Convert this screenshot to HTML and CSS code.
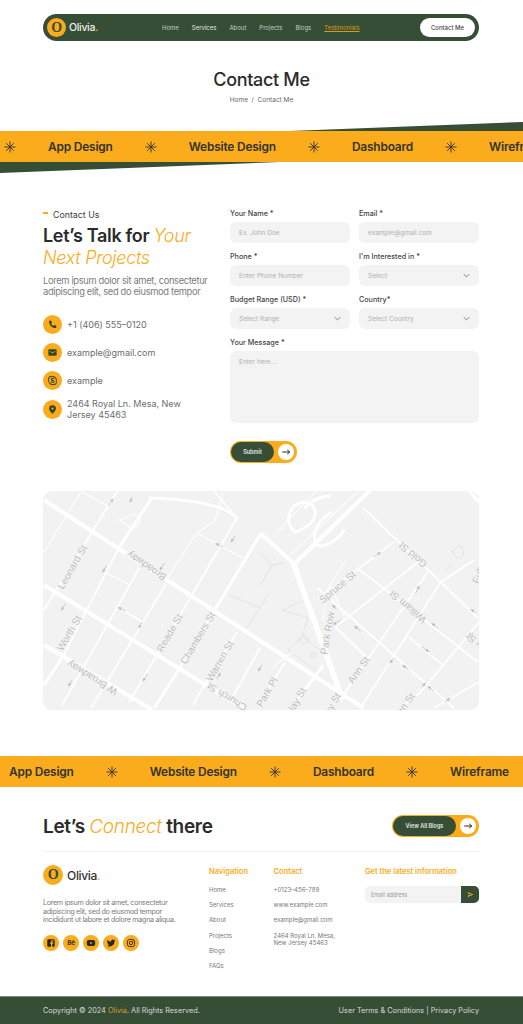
FILE: index.html
```html
<!DOCTYPE html>
<html>
<head>
    <title>Contact Me</title>
    <link rel="stylesheet" href="styles.css">
</head>
<body>
    <header class="wrap">
        <nav class="topbar">
            <a class="logo">
                <span class="logo-mark">O</span>
                <span class="logo-name">Olivia<i>.</i></span>
            </a>
            <ul class="menu">
                <li>Home</li>
                <li class="bright">Services</li>
                <li>About</li>
                <li>Projects</li>
                <li>Blogs</li>
                <li class="current">Testimonials</li>
            </ul>
            <a class="nav-btn">Contact Me</a>
        </nav>
    </header>

    <section class="title-block">
        <h1>Contact Me</h1>
        <p>Home &nbsp;/&nbsp; Contact Me</p>
    </section>

    <section class="ticker-wrap">
        <div class="ticker-back"></div>
        <div class="ticker ticker-top">
            <svg class="star" viewBox="0 0 12 12"><use href="#star"/></svg>
            <span>App Design</span>
            <svg class="star" viewBox="0 0 12 12"><use href="#star"/></svg>
            <span>Website Design</span>
            <svg class="star" viewBox="0 0 12 12"><use href="#star"/></svg>
            <span>Dashboard</span>
            <svg class="star" viewBox="0 0 12 12"><use href="#star"/></svg>
            <span>Wireframe</span>
        </div>
    </section>

    <section class="wrap contact">
        <div class="contact-left">
            <div class="eyebrow"><b></b>Contact Us</div>
            <h2>Let’s Talk for <em>Your Next Projects</em></h2>
            <p class="lead">Lorem ipsum dolor sit amet, consectetur adipiscing elit, sed do eiusmod tempor</p>
            <ul class="info">
                <li>
                    <span class="round"><svg viewBox="0 0 24 24"><path d="M6.600 3.500l3 .6 1.300 4.300-2 1.900c1 2.100 2.700 3.800 4.800 4.800l1.900-2 4.300 1.300.6 3c.1 1-.7 2.100-1.800 2.100C10.800 19.500 4.500 13.200 4.500 5.300c0-1.100.9-1.900 2.100-1.800z"/></svg></span>
                    <span>+1 (406) 555–0120</span>
                </li>
                <li>
                    <span class="round"><svg viewBox="0 0 24 24"><path d="M5 5h14a2 2 0 0 1 2 2v10a2 2 0 0 1-2 2H5a2 2 0 0 1-2-2V7a2 2 0 0 1 2-2zm1 3.500v1.700l6 3.600 6-3.600V8.500l-6 3.500z" fill-rule="evenodd"/></svg></span>
                    <span>example@gmail.com</span>
                </li>
                <li>
                    <span class="round"><svg viewBox="0 0 24 24"><path class="line" d="M8 3.500a4.500 4.500 0 0 0-4.300 5.800 8.700 8.700 0 0 0 11 11 4.500 4.500 0 0 0 5.600-5.600 8.700 8.700 0 0 0-11-11A4.500 4.500 0 0 0 8 3.500z"/><path class="line" d="M15.500 9c-1-1.500-5.800-1.800-6 .7-.2 2.600 6.200 1.700 6 4.500-.2 2.300-5.600 2.200-7 .3"/></svg></span>
                    <span>example</span>
                </li>
                <li>
                    <span class="round"><svg viewBox="0 0 24 24"><path fill-rule="evenodd" d="M12 2.500a7.500 7.500 0 0 1 7.500 7.500c0 5-7.500 11.500-7.500 11.500S4.500 15 4.500 10A7.500 7.500 0 0 1 12 2.500zm0 5a2.500 2.500 0 1 0 0 5 2.500 2.500 0 0 0 0-5z"/></svg></span>
                    <span class="address">2464 Royal Ln. Mesa, New Jersey 45463</span>
                </li>
            </ul>
        </div>

        <form class="contact-form">
            <div class="field">
                <label>Your Name *</label>
                <input type="text" placeholder="Ex. John Doe">
            </div>
            <div class="field">
                <label>Email *</label>
                <input type="text" placeholder="example@gmail.com">
            </div>
            <div class="field">
                <label>Phone *</label>
                <input type="text" placeholder="Enter Phone Number">
            </div>
            <div class="field">
                <label>I'm Interested in *</label>
                <div class="select">Select<svg viewBox="0 0 10 6"><path d="M1 1l4 4 4-4"/></svg></div>
            </div>
            <div class="field">
                <label>Budget Range (USD) *</label>
                <div class="select">Select Range<svg viewBox="0 0 10 6"><path d="M1 1l4 4 4-4"/></svg></div>
            </div>
            <div class="field">
                <label>Country*</label>
                <div class="select">Select Country<svg viewBox="0 0 10 6"><path d="M1 1l4 4 4-4"/></svg></div>
            </div>
            <div class="field field-wide">
                <label>Your Message *</label>
                <textarea placeholder="Enter here..."></textarea>
            </div>
            <a class="pill-btn submit-btn">
                <span class="pill-label">Submit</span>
                <span class="pill-arrow"><svg viewBox="0 0 12 12"><path d="M1.500 6h9M7.500 3.500L10.500 6 7.500 8.500"/></svg></span>
            </a>
        </form>
    </section>

    <section class="wrap">
        <div class="map">
            <svg viewBox="44 491 434 219" preserveAspectRatio="none">
                <defs>
                    <marker id="arrow" markerWidth="5" markerHeight="5" refX="2.500" refY="2.500" orient="auto">
                        <path d="M0 0.500L5 2.500 0 4.500z" fill="#bdbdbd"/>
                    </marker>
                </defs>
                <g class="park">
                    <path d="M260 553l12 12-12 20M272 565l12-2M230 595l30 13M244 632l16-24 8-14"/>
                    <path d="M282 610l26 8-6 18 20 16M310 598l-28 12M302 636l-14 14 32 24"/>
                    <circle cx="304" cy="640" r="4"/>
                    <circle cx="313" cy="655" r="2.500"/>
                    <path d="M460 545l-9 6 6 8 6-5zM450 565l-6 4"/>
                </g>
                <g class="road r1">
                    <path d="M82 492L45 552M197 533l-29 45M197 533l46 25M107 573l23 12M197 533l18-12 8-29M110 507L83 492M316 491l-40 42"/>
                    <path d="M120 520l14-6 8 5-4 8-6 1z"/>
                    <path d="M330 586l14 30M345 560l-18 30-4 30M292 652l-20 16"/>
                </g>
                <g class="road r2">
                    <path d="M118 491L45 610M120 547L63 658M140 568L63 705M167 583L92 708M237 518L130 702M237 632l-44 73M260 648l-30 54M215 610l-35 58"/>
                    <path d="M120 608l23 14M363 508l114 110M393 542l-76 58M420 560l-85 67M357 568l120 94M427 572l-52 76-32 47M473 560l-33 22-78 123M317 588l136 120M478 622l-58 70-20 16M478 682l-45 26M408 637l34 28M335 627l32 31M285 662l-25 40M215 492l22 26"/>
                </g>
                <g class="road r3">
                    <path d="M153 497L120 547M63 658L45 685M260 535L215 610M180 668L155 708M323 665l-33 45"/>
                    <path d="M150 498Q220 500 237 518"/>
                    <path d="M467 490l11 12"/>
                    <path d="M295 532c-12-10-6-28 8-30 14 0 16 16 4 24-6 4-10 6-12 6z"/>
                    <path d="M332 512c-14 8-22 22-16 32 6 6 22-4 28-14"/>
                    <path d="M330 496c-10 0-18 4-26 12"/>
                </g>
                <g class="road r4">
                    <path d="M45 500L363 708M45 585L243 708M45 645L153 710"/>
                    <path d="M260 533l33 30M370 490l-77 75"/>
                </g>
                <path class="road r6" d="M293 563l34 94 15 43"/>
                <path class="road r1" d="M358 491L290 555"/>
                <g class="way">
                    <path d="M133 497l-2 4"/>
                    <path d="M109 506l4-6"/>
                    <path d="M107 566l-3 5"/>
                    <path d="M66 604l-3 5"/>
                    <path d="M73 680l-3 5"/>
                    <path d="M143 622l-3 5"/>
                    <path d="M126 611l-6-3"/>
                    <path d="M165 563l-4 6"/>
                    <path d="M148 674l-4 6"/>
                    <path d="M197 638l-3 5"/>
                    <path d="M235 536l-3 5"/>
                    <path d="M223 547l-6-3"/>
                    <path d="M373 557l6-4"/>
                    <path d="M340 620l-6 4"/>
                    <path d="M415 593l3-6"/>
                    <path d="M336 609l-3-3"/>
                    <path d="M360 631l-5-4"/>
                    <path d="M437 628l-5-4"/>
                    <path d="M421 647l6 4"/>
                    <path d="M475 613l-4-3"/>
                    <path d="M468 638l3-4"/>
                    <path d="M393 658l-3 4"/>
                    <path d="M408 669l-5-3"/>
                    <path d="M421 687l3-3"/>
                    <path d="M433 691l-5-4"/>
                    <path d="M444 702l4-3"/>
                    <path d="M262 665l-3 5"/>
                    <path d="M217 679l3-5"/>
                </g>
                <g class="labels">
                    <text transform="translate(147 566) rotate(214)">Broadway</text>
                    <text transform="translate(73 567) rotate(-60)">Leonard St</text>
                    <text transform="translate(70 633) rotate(-60)">Worth St</text>
                    <text transform="translate(93 678) rotate(212)">W Broadway</text>
                    <text transform="translate(170 633) rotate(-60)">Reade St</text>
                    <text transform="translate(198 638) rotate(-60)">Chambers St</text>
                    <text transform="translate(220 661) rotate(-60)">Warren St</text>
                    <text transform="translate(227 697) rotate(212)">Church St</text>
                    <text transform="translate(337 587) rotate(-40)">Spruce St</text>
                    <text transform="translate(412 555) rotate(220)">Gold St</text>
                    <text transform="translate(407 607) rotate(220)">William St</text>
                    <text transform="translate(327 633) rotate(-80)">Park Row</text>
                    <text transform="translate(358 670) rotate(-55)">Ann St</text>
                    <text transform="translate(267 692) rotate(-60)">Park Pl</text>
                    <text transform="translate(292 708) rotate(-60)">Barclay St</text>
                    <text transform="translate(328 711) rotate(-60)">Vesey St</text>
                    <text transform="translate(402 708) rotate(-55)">John St</text>
                    <text transform="translate(484 650) rotate(220)">Nassau St</text>
                    <text transform="translate(479 570) rotate(-70)">Fulton</text>
                </g>
            </svg>
        </div>
    </section>

    <section class="ticker ticker-bottom">
        <span>App Design</span>
        <svg class="star" viewBox="0 0 12 12"><use href="#star"/></svg>
        <span>Website Design</span>
        <svg class="star" viewBox="0 0 12 12"><use href="#star"/></svg>
        <span>Dashboard</span>
        <svg class="star" viewBox="0 0 12 12"><use href="#star"/></svg>
        <span>Wireframe</span>
    </section>

    <footer>
        <div class="wrap connect">
            <h2>Let’s <em>Connect</em> there</h2>
            <a class="pill-btn blogs-btn">
                <span class="pill-label">View All Blogs</span>
                <span class="pill-arrow"><svg viewBox="0 0 12 12"><path d="M1.500 6h9M7.500 3.500L10.500 6 7.500 8.500"/></svg></span>
            </a>
        </div>
        <div class="wrap footer-main">
            <div class="about">
                <a class="logo logo-dark">
                    <span class="logo-mark">O</span>
                    <span class="logo-name">Olivia<i>.</i></span>
                </a>
                <p>Lorem ipsum dolor sit amet, consectetur adipiscing elit, sed do eiusmod tempor incididunt ut labore et dolore magna aliqua.</p>
                <div class="socials">
                    <span class="round"><svg viewBox="0 0 24 24"><path d="M6 3h12a3 3 0 0 1 3 3v12a3 3 0 0 1-3 3h-3v-7h2.500l.5-3h-3v-1.500c0-.9.4-1.500 1.500-1.500H18V5.500h-2.500C13 5.500 12 7 12 9.500V11H9.500v3H12v7H6a3 3 0 0 1-3-3V6a3 3 0 0 1 3-3z"/></svg></span>
                    <span class="round behance">Bē</span>
                    <span class="round"><svg viewBox="0 0 24 24"><path fill-rule="evenodd" d="M6 5h12a4 4 0 0 1 4 4v6a4 4 0 0 1-4 4H6a4 4 0 0 1-4-4V9a4 4 0 0 1 4-4zm4 4v6l5.500-3z"/></svg></span>
                    <span class="round"><svg viewBox="0 0 24 24"><path d="M22.500 5.500c-.8.4-1.600.6-2.400.7.900-.5 1.500-1.300 1.800-2.300-.8.500-1.700.8-2.600 1a4.200 4.200 0 0 0-7.200 3.800C8.600 8.500 5.500 6.900 3.400 4.300c-1.100 1.900-.6 4.300 1.300 5.600-.7 0-1.300-.2-1.900-.5 0 2 1.400 3.800 3.400 4.200-.6.200-1.300.2-1.900.1.500 1.700 2.100 2.900 3.900 2.900A8.500 8.500 0 0 1 2 18.300 12 12 0 0 0 20.500 7.700c.8-.6 1.500-1.300 2-2.200z"/></svg></span>
                    <span class="round"><svg viewBox="0 0 24 24"><rect class="line" x="3.500" y="3.500" width="17" height="17" rx="5"/><circle class="line" cx="12" cy="12" r="4"/><circle cx="17" cy="7" r="1.200"/></svg></span>
                </div>
            </div>
            <div class="foot-col col-nav">
                <h4>Navigation</h4>
                <ul>
                    <li>Home</li>
                    <li>Services</li>
                    <li>About</li>
                    <li>Projects</li>
                    <li>Blogs</li>
                    <li>FAQs</li>
                </ul>
            </div>
            <div class="foot-col col-contact">
                <h4>Contact</h4>
                <ul>
                    <li>+0123–456–789</li>
                    <li>www.example.com</li>
                    <li>example@gmail.com</li>
                    <li class="two-line">2464 Royal Ln. Mesa, New Jersey 45463</li>
                </ul>
            </div>
            <div class="foot-col col-news">
                <h4>Get the latest information</h4>
                <div class="subscribe">
                    <input type="text" placeholder="Email address">
                    <a><svg viewBox="0 0 12 12"><path d="M1 1.500L11 6 1 10.500 2.500 7H7V5H2.500z"/></svg></a>
                </div>
            </div>
        </div>
        <div class="bottom-bar">
            <div class="wrap bottom-inner">
                <span>Copyright © 2024 <b>Olivia</b>. All Rights Reserved.</span>
                <span>User Terms &amp; Conditions | Privacy Policy</span>
            </div>
        </div>
    </footer>

    <svg class="sprite" width="0" height="0">
        <symbol id="star" viewBox="0 0 12 12">
            <path d="M6 0.500v11M0.500 6h11M2.100 2.100l7.800 7.800M9.900 2.100l-7.800 7.800" stroke="#33332e" stroke-width="0.900" fill="none"/>
        </symbol>
    </svg>
</body>
</html>
```

FILE: styles.css
```css
* {
    box-sizing: border-box;
}

body {
    margin: 0;
    width: 523px;
    height: 1024px;
    overflow: hidden;
    background-color: #fff;
    font-family: Inter, "Liberation Sans", sans-serif;
    color: #2b2b2b;
    letter-spacing: -0.02em;
}

ul {
    list-style: none;
    margin: 0;
    padding: 0;
}

em {
    font-style: italic;
    font-weight: 300;
    color: #faac1c;
}

.wrap {
    margin: 0 44px 0 43px;
}

.sprite {
    position: absolute;
}

/* top nav */
header {
    padding-top: 14px;
}

.topbar {
    display: flex;
    align-items: center;
    height: 27px;
    padding: 0 4px;
    border-radius: 14px;
    background-color: #364d36;
}

.logo {
    display: flex;
    align-items: center;
    gap: 3px;
    width: 110px;
}

.logo-mark {
    display: flex;
    align-items: center;
    justify-content: center;
    width: 19px;
    height: 19px;
    border-radius: 50%;
    background-color: #faac1c;
    color: #364d36;
    font-family: "Liberation Serif", serif;
    font-size: 14px;
    font-weight: 700;
}

.logo-name {
    color: #f1f1f1;
    font-size: 10.500px;
    font-weight: 500;
}

.logo-name i {
    font-style: normal;
    color: #faac1c;
}

.menu {
    display: flex;
    gap: 13px;
    margin-left: 5px;
    font-size: 6px;
    color: #c9cfc8;
    letter-spacing: 0;
}

.menu .bright {
    color: #e6e9e5;
}

.menu .current {
    color: #d99c1e;
    text-decoration: underline;
}

.nav-btn {
    display: flex;
    align-items: center;
    justify-content: center;
    width: 55px;
    height: 19px;
    margin-left: auto;
    border-radius: 10px;
    background-color: #fff;
    font-size: 6px;
    font-weight: 500;
    letter-spacing: 0;
    color: #444;
}

/* page title */
.title-block {
    padding-top: 29px;
    height: 81px;
    text-align: center;
}

.title-block h1 {
    margin: 0;
    font-size: 18px;
    line-height: 20px;
    font-weight: 500;
}

.title-block p {
    margin: 5px 0 0;
    font-size: 6.500px;
    line-height: 10px;
    letter-spacing: 0;
    color: #666;
}

/* orange strips */
.ticker-wrap {
    position: relative;
    height: 51px;
}

.ticker-back {
    position: absolute;
    inset: 0;
    background-color: #364d36;
    clip-path: polygon(290px 9px, 523px 0, 523px 40px, 280px 40px, 0 51px, 0 9px);
}

.ticker {
    display: flex;
    align-items: center;
    gap: 32px;
    height: 31px;
    overflow: hidden;
    background-color: #faac1c;
    font-size: 11.900px;
    font-weight: 600;
    letter-spacing: -0.015em;
    white-space: nowrap;
    color: #33332e;
}

.ticker span {
    flex: none;
}

.ticker-top {
    position: relative;
    top: 9px;
    padding-left: 4px;
}

.ticker-bottom {
    margin-top: 46px;
    padding-left: 9px;
}

.star {
    flex: none;
    width: 12px;
    height: 12px;
}

/* contact block */
.contact {
    display: flex;
    justify-content: space-between;
    padding-top: 36px;
}

.contact-left {
    width: 176px;
}

.eyebrow {
    display: flex;
    align-items: center;
    gap: 5px;
    height: 10px;
    font-size: 8.800px;
    letter-spacing: 0;
    color: #3b3b3b;
}

.eyebrow b {
    width: 5px;
    height: 2px;
    margin-top: -3px;
    background-color: #faac1c;
}

.contact-left h2 {
    margin: 6px 0 0;
    font-size: 18px;
    line-height: 22px;
    font-weight: 600;
}

.lead {
    margin: 6px 0 0;
    font-size: 9.300px;
    line-height: 11px;
    color: #7b7b7b;
}

.info {
    margin-top: 17px;
    font-size: 9px;
    line-height: 11px;
    color: #6d6d6d;
    letter-spacing: 0;
}

.info li {
    display: flex;
    align-items: center;
    gap: 5px;
    min-height: 20px;
    margin-bottom: 8px;
}

.address {
    width: 120px;
}

.round {
    display: flex;
    flex: none;
    align-items: center;
    justify-content: center;
    width: 19px;
    height: 19px;
    border-radius: 50%;
    background-color: #faac1c;
}

.round svg {
    width: 11px;
    height: 11px;
    fill: #2f452f;
}

.round .line {
    fill: none;
    stroke: #2f452f;
    stroke-width: 2.200;
}

.contact-form {
    display: grid;
    grid-template-columns: 120px 120px;
    column-gap: 9px;
    width: 249px;
    padding-top: 1px;
}

.field {
    height: 43px;
}

.field label {
    display: block;
    height: 8px;
    margin-bottom: 4px;
    font-size: 7.200px;
    line-height: 8px;
    font-weight: 500;
    letter-spacing: 0;
    color: #444;
}

.field input,
.field textarea,
.select {
    display: block;
    width: 100%;
    height: 21px;
    padding: 0 9px;
    border: none;
    border-radius: 6px;
    background-color: #f3f3f3;
    font-family: Inter, "Liberation Sans", sans-serif;
    font-size: 6.500px;
    letter-spacing: 0;
    color: #b0b0b0;
}

.field input::placeholder,
.field textarea::placeholder,
.subscribe input::placeholder {
    color: #b0b0b0;
    opacity: 1;
}

.select {
    display: flex;
    align-items: center;
    justify-content: space-between;
}

.select svg {
    width: 7px;
    height: 5px;
    fill: none;
    stroke: #555;
    stroke-width: 1;
}

.field-wide {
    grid-column: 1 / 3;
    height: 84px;
}

.field textarea {
    height: 72px;
    padding-top: 7px;
    resize: none;
}

.pill-btn {
    display: flex;
    align-items: center;
    justify-content: space-between;
    padding: 1px 3px 1px 1px;
    border-radius: 12px;
    background-color: #faac1c;
}

.pill-label {
    display: flex;
    align-items: center;
    justify-content: center;
    height: 100%;
    border-radius: 11px;
    background-color: #364d36;
    font-size: 5.500px;
    font-weight: 600;
    letter-spacing: 0;
    color: #e8e8e8;
}

.pill-arrow {
    display: flex;
    align-items: center;
    justify-content: center;
    width: 16px;
    height: 16px;
    border-radius: 50%;
    background-color: #fff;
}

.pill-arrow svg {
    width: 10px;
    height: 10px;
    fill: none;
    stroke: #2b2b2b;
    stroke-width: 1.200;
}

.submit-btn {
    width: 67px;
    height: 22px;
    margin-top: 18px;
}

.submit-btn .pill-label {
    width: 43px;
}

/* map */
.map {
    margin-top: 28px;
    height: 219px;
    border-radius: 9px;
    overflow: hidden;
    background-color: #f2f2f2;
}

.map svg {
    display: block;
    width: 100%;
    height: 100%;
}

.road {
    fill: none;
    stroke: #fff;
}

.r1 { stroke-width: 1; }
.r2 { stroke-width: 1.800; }
.r3 { stroke-width: 3; }
.r4 { stroke-width: 4.200; }
.r6 { stroke-width: 5.500; }

.park {
    fill: none;
    stroke: #dcdcdc;
    stroke-width: 0.700;
}

.way path {
    fill: none;
    stroke: #bdbdbd;
    stroke-width: 0.800;
    marker-end: url(#arrow);
}

.labels text {
    fill: #bdbdbd;
    stroke: #f6f6f6;
    stroke-width: 1.500;
    paint-order: stroke;
    font-family: "Liberation Sans", Arial, sans-serif;
    font-size: 10px;
    text-anchor: middle;
    dominant-baseline: central;
    letter-spacing: 0;
}

/* footer */
.connect {
    display: flex;
    align-items: center;
    justify-content: space-between;
    height: 65px;
    padding-top: 14px;
    border-bottom: 1px solid #f1f1f1;
}

.connect h2 {
    margin: 0;
    font-size: 19px;
    font-weight: 600;
}

.blogs-btn {
    width: 87px;
    height: 22px;
}

.blogs-btn .pill-label {
    width: 63px;
}

.footer-main {
    display: flex;
    height: 144px;
    padding-top: 13px;
}

.about {
    width: 167px;
}

.logo-dark {
    gap: 4px;
}

.logo-dark .logo-mark {
    width: 20px;
    height: 20px;
}

.logo-dark .logo-name {
    font-size: 12px;
    color: #333;
}

.about p {
    width: 138px;
    margin: 14px 0 0;
    font-size: 7.200px;
    line-height: 8.500px;
    color: #7b7b7b;
}

.socials {
    display: flex;
    gap: 4px;
    margin-top: 10px;
}

.socials .round {
    width: 16px;
    height: 16px;
}

.socials svg {
    width: 10px;
    height: 10px;
    fill: #262b22;
}

.socials .line {
    stroke: #262b22;
}

.behance {
    font-size: 6.500px;
    font-weight: 700;
    color: #2f3a2c;
}

.foot-col {
    padding-top: 2px;
}

.foot-col h4 {
    margin: 0;
    height: 10px;
    font-size: 7.500px;
    line-height: 10px;
    font-weight: 600;
    letter-spacing: 0;
    color: #faac1c;
}

.foot-col ul {
    margin-top: 9px;
    font-size: 6px;
    letter-spacing: 0;
    color: #777;
}

.foot-col li {
    height: 15.200px;
    line-height: 8px;
}

.foot-col .two-line {
    width: 66px;
    line-height: 7.500px;
}

.col-nav {
    width: 65px;
}

.col-contact {
    width: 92px;
}

.col-news {
    flex: 1;
}

.subscribe {
    display: flex;
    width: 114px;
    height: 17px;
    margin-top: 9px;
    border-radius: 5px;
    overflow: hidden;
    background-color: #f3f3f3;
}

.subscribe input {
    flex: 1;
    min-width: 0;
    padding: 0 6px;
    border: none;
    background: none;
    font-family: Inter, "Liberation Sans", sans-serif;
    font-size: 5.500px;
    letter-spacing: 0;
}

.subscribe input::placeholder {
    color: #999;
}

.subscribe a {
    display: flex;
    flex: none;
    align-items: center;
    justify-content: center;
    width: 18px;
    background-color: #364d36;
}

.subscribe svg {
    width: 7px;
    height: 7px;
    fill: #faac1c;
}

.bottom-bar {
    height: 28px;
    background-color: #364d36;
    border-top: 1px solid #7c8b7b;
    color: #d8dcd6;
    font-size: 7.300px;
    letter-spacing: 0;
}

.bottom-inner {
    display: flex;
    align-items: center;
    justify-content: space-between;
    height: 100%;
}

.bottom-inner b {
    font-weight: 400;
    color: #d99c1e;
}
```
